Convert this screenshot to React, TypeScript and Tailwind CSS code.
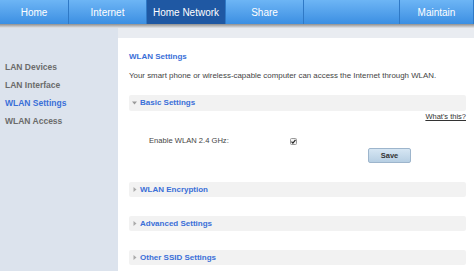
export default function App() {
  const tabs = [
    { label: 'Home', w: 'w-[69px]' },
    { label: 'Internet', w: 'w-[78px]' },
    { label: 'Home Network', w: 'w-[79px]', active: true },
    { label: 'Share', w: 'w-[78px]' },
    { label: '', w: 'w-[96px]' },
    { label: 'Maintain', w: 'flex-1' },
  ];
  const side = ['LAN Devices', 'LAN Interface', 'WLAN Settings', 'WLAN Access'];
  const sections = ['WLAN Encryption', 'Advanced Settings', 'Other SSID Settings'];

  return (
    <div className="w-[474px] h-[271px] overflow-hidden bg-[#e9ecf1] font-['Liberation_Sans',Arial,sans-serif]">
      {/* top nav */}
      <div className="flex h-[24px] bg-gradient-to-b from-[#6db5f5] to-[#3b8fe2]">
        {tabs.map((t, i) => (
          <div
            key={i}
            className={`${t.w} flex items-center justify-center text-[10px] text-white border-r border-[#2f79c6] ${
              t.active ? 'bg-[#1f58a3]' : ''
            }`}
          >
            {t.label}
          </div>
        ))}
      </div>
      <div className="h-[4px] bg-gradient-to-b from-[#8f8f8f] to-[#e4e6ea]" />

      <div className="flex h-[243px]">
        {/* sidebar */}
        <div className="w-[118px] bg-[#dce3ed] pt-[30px] pl-[5px]">
          {side.map((s) => (
            <div
              key={s}
              className={`h-[18px] flex items-center text-[8.5px] font-bold ${
                s === 'WLAN Settings' ? 'text-[#3a6fd8]' : 'text-[#6b6b6b]'
              }`}
            >
              {s}
            </div>
          ))}
        </div>

        {/* content */}
        <div className="flex-1 pt-[10px]">
          <div className="h-full bg-white pl-[11px] pr-[8px] pt-[14px]">
            <div className="text-[8px] font-bold text-[#3a6fd8] leading-[10px]">WLAN Settings</div>
            <div className="mt-[9px] text-[7.9px] text-[#444] leading-[10px]">
              Your smart phone or wireless-capable computer can access the Internet through WLAN.
            </div>

            <div className="mt-[14px] h-[16px] rounded-[2px] bg-[#f2f2f2] flex items-center pl-[3px] gap-[3px]">
              <svg width="5" height="4" viewBox="0 0 5 4">
                <path d="M0 0.5h5L2.5 3.5z" fill="#9a9a9a" />
              </svg>
              <span className="text-[8px] font-bold text-[#3a6fd8]">Basic Settings</span>
            </div>
            <div className="flex justify-end mt-[1px]">
              <span className="text-[7.5px] text-[#333] underline leading-[10px]">What's this?</span>
            </div>

            <div className="flex items-center mt-[14px] h-[10px]">
              <span className="ml-[20px] w-[141px] text-[7.6px] text-[#444]">Enable WLAN 2.4 GHz:</span>
              <svg width="7" height="7" viewBox="0 0 7 7">
                <rect x="0.5" y="0.5" width="6" height="6" rx="1" fill="#f4f4f4" stroke="#999" />
                <path d="M1.5 3.6l1.4 1.5 2.6-3.2" fill="none" stroke="#222" strokeWidth="1.2" />
              </svg>
            </div>

            <div className="flex mt-[2px]">
              <div className="ml-[239px] w-[43px] h-[15px] rounded-[2px] bg-gradient-to-b from-[#d6e6f3] to-[#b7cfe3] border border-[#9db5cc] flex items-center justify-center text-[7.5px] font-bold text-[#333]">
                Save
              </div>
            </div>

            {sections.map((s) => (
              <div
                key={s}
                className="mt-[19px] h-[15px] rounded-[2px] bg-[#f2f2f2] flex items-center pl-[4px] gap-[3px]"
              >
                <svg width="4" height="5" viewBox="0 0 4 5">
                  <path d="M0.5 0L3.5 2.5L0.5 5z" fill="#aaa" />
                </svg>
                <span className="text-[8px] font-bold text-[#3a6fd8]">{s}</span>
              </div>
            ))}
          </div>
        </div>
      </div>
    </div>
  );
}
